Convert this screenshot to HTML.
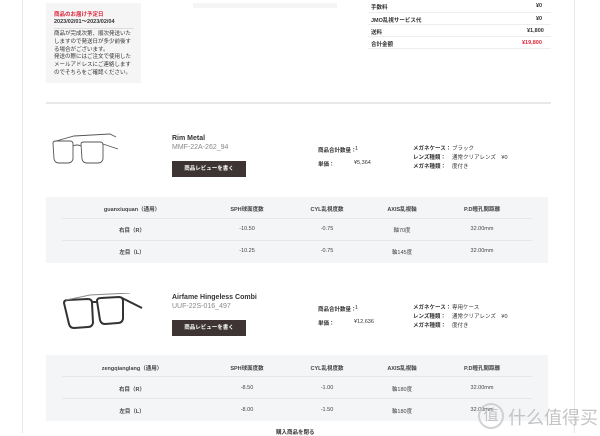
<!DOCTYPE html>
<html><head><meta charset="utf-8"><style>
*{margin:0;padding:0;box-sizing:border-box}
body{width:600px;height:433px;overflow:hidden;background:#fff;font-family:"Liberation Sans","Noto Sans CJK JP",sans-serif;color:#333;position:relative}
.a{position:absolute;white-space:nowrap}
.b{font-weight:bold}
.s{font-size:5.5px}
.vl{position:absolute;top:0;width:1px;height:433px;background:#e6e6e6}
.tbl{position:absolute;left:46px;width:502px;background:#f4f5f7}
.sep{position:absolute;left:16px;width:470px;height:1px;background:#e4e6ea}
.c{position:absolute;width:100px;text-align:center;font-size:5.5px;color:#444}
.btn{position:absolute;background:#3d3433;color:#fff;font-size:5.5px;font-weight:bold;text-align:center;line-height:16px;width:74px;height:16px}
</style></head><body>
<div class="vl" style="left:22px"></div>
<div class="vl" style="left:574px"></div>
<div class="a" style="left:46px;top:3px;width:95px;height:80px;background:#f5f5f5"></div>
<div class="a b s" style="left:54px;top:10px;color:#e0283c">商品のお届け予定日</div>
<div class="a b s" style="left:54px;top:17px">2023/02/01～2023/02/04</div>
<div class="a" style="left:54px;top:28px;width:80px;height:1px;background:#ddd"></div>
<div class="a s" style="left:54px;top:31px;line-height:7.8px;white-space:normal;width:82px">商品が完成次第、順次発送いたしますので発送日が多少前後する場合がございます。<br>発送の際にはご注文で使用したメールアドレスにご連絡しますのでそちらをご確認ください。</div>
<div class="a" style="left:193px;top:3px;width:144px;height:5px;background:#f5f5f5"></div>
<div class="a b s" style="left:371px;top:3px">手数料</div><div class="a b s" style="left:536px;top:3px">¥0</div>
<div class="a" style="left:368px;top:12px;width:183px;height:1px;background:#eee"></div>
<div class="a b s" style="left:371px;top:16px">JMO乱視サービス代</div><div class="a b s" style="left:536px;top:16px">¥0</div>
<div class="a" style="left:368px;top:24px;width:183px;height:1px;background:#eee"></div>
<div class="a b s" style="left:371px;top:28px">送料</div><div class="a b s" style="left:527px;top:28px">¥1,800</div>
<div class="a" style="left:368px;top:36px;width:183px;height:1px;background:#eee"></div>
<div class="a b s" style="left:371px;top:40px">合計金額</div><div class="a b s" style="left:522px;top:40px;color:#e0283c">¥19,800</div>
<div class="a" style="left:368px;top:48px;width:183px;height:1px;background:#eee"></div>
<div class="a" style="left:46px;top:102px;width:505px;height:2px;background:#e8e8e8"></div>

<svg class="a" style="left:50px;top:133px" width="70" height="42" viewBox="0 0 70 42"><g fill="none" stroke="#555" stroke-width="0.9"><path d="M3 10 Q3 8 6 8 L20 8 Q23 8 23 11 L23 26 Q22 30 18 30 L9 30 Q5 30 4 26 Z"/><path d="M23 13 Q27 11 31 13"/><path d="M31 11 Q31 9 34 9 L50 9 Q53 9 53 12 L53 26 Q52 30 48 30 L37 30 Q33 30 32 26 Z"/><path d="M53 11 L68 16"/><path d="M6 8 L24 3 L60 1 L66 4"/></g></svg>
<div class="a b" style="left:172px;top:135px;font-size:7px;color:#333">Rim Metal</div>
<div class="a" style="left:172px;top:144px;font-size:7px;color:#888">MMF-22A-262_94</div>
<div class="btn" style="left:172px;top:161px">商品レビューを書く</div>
<div class="a b s" style="left:318px;top:146px">商品合計数量：</div><div class="a s" style="left:355px;top:146px">1</div>
<div class="a b s" style="left:318px;top:160px">単価：</div><div class="a s" style="left:354px;top:160px">¥5,364</div>
<div class="a b s" style="left:413px;top:144px">メガネケース：</div><div class="a s" style="left:452px;top:144px">ブラック</div>
<div class="a b s" style="left:413px;top:153px">レンズ種類：</div><div class="a s" style="left:452px;top:153px">通常クリアレンズ　¥0</div>
<div class="a b s" style="left:413px;top:162px">メガネ種類：</div><div class="a s" style="left:452px;top:162px">度付き</div>

<div class="tbl" style="top:197px;height:66px">
<div class="c b" style="left:36px;top:8px">guanxiuquan（通用）</div><div class="c b" style="left:151px;top:8px">SPH球面度数</div><div class="c b" style="left:231px;top:8px">CYL乱視度数</div><div class="c b" style="left:306px;top:8px">AXIS乱視軸</div><div class="c b" style="left:386px;top:8px">P.D瞳孔間距離</div>
<div class="sep" style="top:21px"></div>
<div class="c b" style="left:36px;top:29px">右目（R）</div><div class="c" style="left:151px;top:29px">-10.50</div><div class="c" style="left:231px;top:29px">-0.75</div><div class="c" style="left:306px;top:29px">軸70度</div><div class="c" style="left:386px;top:29px">32.00mm</div>
<div class="sep" style="top:43px"></div>
<div class="c b" style="left:36px;top:51px">左目（L）</div><div class="c" style="left:151px;top:51px">-10.25</div><div class="c" style="left:231px;top:51px">-0.75</div><div class="c" style="left:306px;top:51px">軸145度</div><div class="c" style="left:386px;top:51px">32.00mm</div>
</div>

<svg class="a" style="left:60px;top:293px" width="85" height="42" viewBox="0 0 85 42"><g fill="none" stroke="#333" stroke-width="2"><path d="M4 10 Q4 7 8 7 L28 6 Q32 6 32 10 L33 30 Q32 34 28 34 L14 35 Q10 35 9 31 Z"/><path d="M32 9 L37 9"/><path d="M37 8 Q37 5 41 5 L59 4 Q63 4 63 8 L63 26 Q62 30 58 30 L45 31 Q41 31 40 27 Z"/><path d="M62 5 L82 15"/><path d="M6 7 L30 2 L70 0" stroke="#888" stroke-width="1"/></g></svg>
<div class="a b" style="left:172px;top:294px;font-size:7px;color:#333">Airfame Hingeless Combi</div>
<div class="a" style="left:172px;top:303px;font-size:7px;color:#888">UUF-22S-016_497</div>
<div class="btn" style="left:172px;top:320px">商品レビューを書く</div>
<div class="a b s" style="left:318px;top:305px">商品合計数量：</div><div class="a s" style="left:355px;top:305px">1</div>
<div class="a b s" style="left:318px;top:319px">単価：</div><div class="a s" style="left:354px;top:319px">¥12,636</div>
<div class="a b s" style="left:413px;top:303px">メガネケース：</div><div class="a s" style="left:452px;top:303px">専用ケース</div>
<div class="a b s" style="left:413px;top:312px">レンズ種類：</div><div class="a s" style="left:452px;top:312px">通常クリアレンズ　¥0</div>
<div class="a b s" style="left:413px;top:321px">メガネ種類：</div><div class="a s" style="left:452px;top:321px">度付き</div>

<div class="tbl" style="top:355px;height:66px">
<div class="c b" style="left:36px;top:9px">zengqianglang（通用）</div><div class="c b" style="left:151px;top:9px">SPH球面度数</div><div class="c b" style="left:231px;top:9px">CYL乱視度数</div><div class="c b" style="left:306px;top:9px">AXIS乱視軸</div><div class="c b" style="left:386px;top:9px">P.D瞳孔間距離</div>
<div class="sep" style="top:21px"></div>
<div class="c b" style="left:36px;top:30px">右目（R）</div><div class="c" style="left:151px;top:30px">-8.50</div><div class="c" style="left:231px;top:30px">-1.00</div><div class="c" style="left:306px;top:30px">軸180度</div><div class="c" style="left:386px;top:30px">32.00mm</div>
<div class="sep" style="top:43px"></div>
<div class="c b" style="left:36px;top:52px">左目（L）</div><div class="c" style="left:151px;top:52px">-8.00</div><div class="c" style="left:231px;top:52px">-1.50</div><div class="c" style="left:306px;top:52px">軸180度</div><div class="c" style="left:386px;top:52px">32.00mm</div>
</div>
<div class="a b s" style="left:276px;top:428px">購入商品を閉る</div>
<div class="a" style="left:478px;top:403px;width:26px;height:26px;border:2px solid rgba(200,200,200,.8);border-radius:50%;color:rgba(190,190,190,.9);font-size:15px;text-align:center;line-height:22px">值</div>
<div class="a" style="left:508px;top:404px;font-size:18px;color:rgba(190,190,190,.9);font-family:'Noto Sans CJK SC',sans-serif">什么值得买</div>
</body></html>
